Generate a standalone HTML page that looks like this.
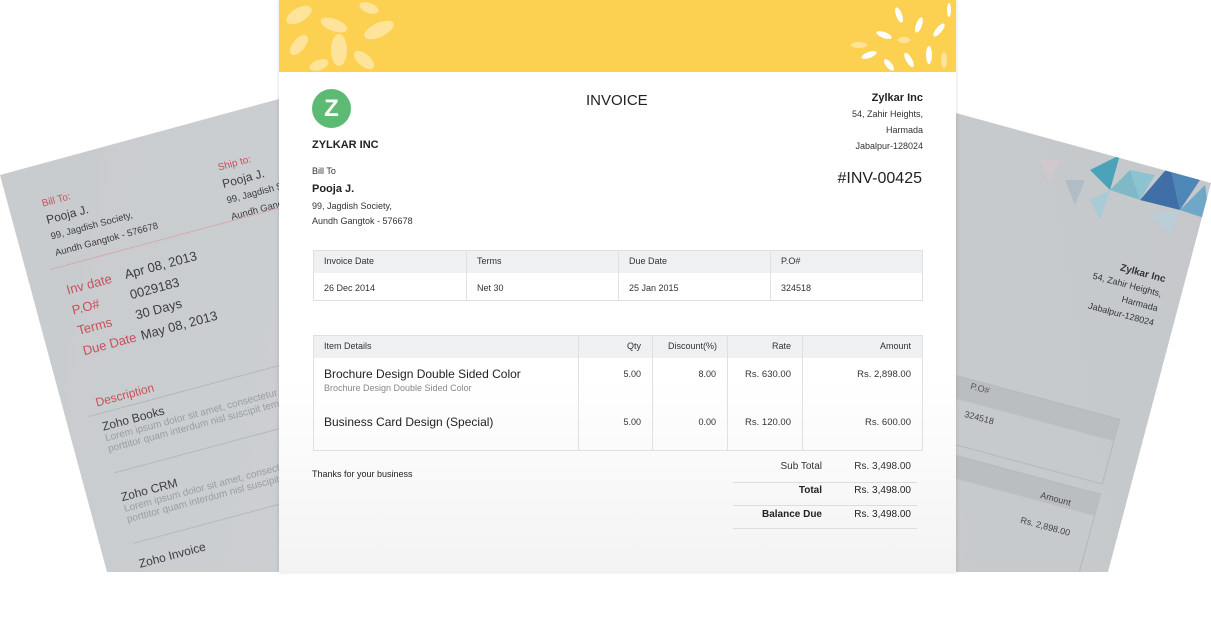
<!DOCTYPE html>
<html><head><meta charset="utf-8"><style>
*{margin:0;padding:0;box-sizing:border-box}
body{width:1211px;height:572px;overflow:hidden;background:#fff;position:relative;font-family:"Liberation Sans",sans-serif;color:#222}
.abs{position:absolute;white-space:nowrap}
.lp{position:absolute;left:0;top:0;width:1211px;height:572px;background:linear-gradient(100deg,#c8cbce,#d0d3d6 60%,#c9ccd0);clip-path:polygon(0 175px,279px 99px,279px 572px,107px 572px)}
.rp{position:absolute;left:0;top:0;width:1211px;height:572px;background:linear-gradient(80deg,#ced1d4,#c5c8cb);clip-path:polygon(956px 113px,1211px 183px,1108px 572px,956px 572px)}
.red{color:#c8505a}
.g{color:#3c3c3c}
.main{position:absolute;left:279px;top:0;width:677px;height:572px;background:linear-gradient(#fff 0,#fff 380px,#f3f3f3 572px);box-shadow:0 0 4px rgba(0,0,0,.15)}
.hdr{position:absolute;left:0;top:0;width:677px;height:72px;background:#fcd152;overflow:hidden}
.t{position:absolute;border:1px solid #e0e0e0;background:#fff}
.th{position:absolute;background:#eef0f1}
.vl{position:absolute;width:1px;background:#e0e0e0}
.s{font-size:10px;color:#333}
</style></head><body>
<div class="lp">
 <div class="abs" style="left:40px;top:196px;transform:rotate(-15deg);transform-origin:0 0;font-size:10px;line-height:17px">
  <div class="red">Bill To:</div>
  <div class="g" style="font-size:12px">Pooja J.</div>
  <div class="g" style="font-size:9.5px">99, Jagdish Society,</div>
  <div class="g" style="font-size:9.5px">Aundh Gangtok - 576678</div>
 </div>
 <div class="abs" style="left:216px;top:160px;transform:rotate(-15deg);transform-origin:0 0;font-size:10px;line-height:17px">
  <div class="red">Ship to:</div>
  <div class="g" style="font-size:12px">Pooja J.</div>
  <div class="g" style="font-size:9.5px">99, Jagdish Society,</div>
  <div class="g" style="font-size:9.5px">Aundh Gangtok</div>
 </div>
 <div class="abs" style="left:50px;top:269px;width:260px;height:1px;background:#d9a0a5;transform:rotate(-15deg);transform-origin:0 0;opacity:.8"></div>
 <div class="abs" style="left:64px;top:280px;transform:rotate(-15deg);transform-origin:0 0;font-size:13px;line-height:21px">
  <div><span class="red" style="display:inline-block;width:60px">Inv date</span><span class="g">Apr 08, 2013</span></div>
  <div><span class="red" style="display:inline-block;width:60px">P.O#</span><span class="g">0029183</span></div>
  <div><span class="red" style="display:inline-block;width:60px">Terms</span><span class="g">30 Days</span></div>
  <div><span class="red" style="display:inline-block;width:60px">Due Date</span><span class="g">May 08, 2013</span></div>
 </div>
 <div class="abs" style="left:94px;top:396px;transform:rotate(-15deg);transform-origin:0 0;font-size:12px">
  <div class="red">Description</div>
  <div style="width:220px;height:1px;background:#b5b8bb;margin:4px 0 6px -10px"></div>
  <div class="g" style="font-size:12px">Zoho Books</div>
  <div style="color:#9a9da0;font-size:10px">Lorem ipsum dolor sit amet, consectetur a</div>
  <div style="color:#9a9da0;font-size:10px">porttitor quam interdum nisl suscipit tem</div>
  <div style="width:220px;height:1px;background:#b5b8bb;margin:18px 0 18px 0"></div>
  <div class="g" style="font-size:12px">Zoho CRM</div>
  <div style="color:#9a9da0;font-size:10px">Lorem ipsum dolor sit amet, consecte</div>
  <div style="color:#9a9da0;font-size:10px">porttitor quam interdum nisl suscipit</div>
  <div style="width:220px;height:1px;background:#b5b8bb;margin:18px 0 14px 0"></div>
  <div class="g" style="font-size:12px">Zoho Invoice</div>
 </div>
</div>
<div class="rp">
 <svg class="abs" style="left:1030px;top:140px" width="181" height="100" viewBox="0 0 181 100">
  <polygon points="10,20 30,20 20,45" fill="#d6c8cc" opacity=".7"/>
  <polygon points="35,40 55,40 45,65" fill="#aab6c0" opacity=".7"/>
  <polygon points="60,30 90,15 80,50" fill="#4aa3b8"/>
  <polygon points="80,50 100,30 110,60" fill="#7fb9c8"/>
  <polygon points="60,60 80,50 70,80" fill="#a9cbd6"/>
  <polygon points="110,60 140,25 150,70" fill="#3f6fa6"/>
  <polygon points="140,25 170,40 150,70" fill="#4f86b8"/>
  <polygon points="150,70 175,45 180,80" fill="#6fa8c6"/>
  <polygon points="100,30 125,35 110,60" fill="#8cc3d0"/>
  <polygon points="120,75 150,70 140,95" fill="#b5cfd8" opacity=".8"/>
 </svg>
 <div class="abs" style="left:1090px;top:252px;transform:rotate(15deg);transform-origin:0 0;font-size:9px;color:#333;text-align:right;width:80px;line-height:15px">
  <div style="font-weight:bold;font-size:10px">Zylkar Inc</div>
  <div>54, Zahir Heights,</div><div>Harmada</div><div>Jabalpur-128024</div>
 </div>
 <div class="abs" style="left:956px;top:375px;width:170px;height:68px;border:1px solid #b4b7ba;transform:rotate(15deg);transform-origin:0 0"><div style="height:22px;background:#bbbec1"></div></div>
 <div class="abs" style="left:972px;top:381px;transform:rotate(15deg);transform-origin:0 0;font-size:9px;color:#555">P.O#</div>
 <div class="abs" style="left:966px;top:409px;transform:rotate(15deg);transform-origin:0 0;font-size:9px;color:#444">324518</div>
 <div class="abs" style="left:956px;top:455px;width:150px;height:130px;border:1px solid #b4b7ba;transform:rotate(15deg);transform-origin:0 0"><div style="height:22px;background:#bbbec1"></div></div>
 <div class="abs" style="left:1042px;top:490px;transform:rotate(15deg);transform-origin:0 0;font-size:9px;color:#444">Amount</div>
 <div class="abs" style="left:1022px;top:515px;transform:rotate(15deg);transform-origin:0 0;font-size:9px;color:#444">Rs. 2,898.00</div>
</div>

<div class="main">
 <div class="hdr">
  <svg width="677" height="72" viewBox="0 0 677 72">
   <g fill="#fde49a">
    <ellipse cx="20" cy="15" rx="14" ry="7" transform="rotate(-30 20 15)"/>
    <ellipse cx="55" cy="25" rx="14" ry="6" transform="rotate(20 55 25)"/>
    <ellipse cx="20" cy="45" rx="12" ry="6" transform="rotate(-50 20 45)"/>
    <ellipse cx="60" cy="50" rx="8" ry="16"/>
    <ellipse cx="100" cy="30" rx="16" ry="7" transform="rotate(-25 100 30)"/>
    <ellipse cx="85" cy="60" rx="12" ry="6" transform="rotate(40 85 60)"/>
    <ellipse cx="40" cy="65" rx="10" ry="5" transform="rotate(-20 40 65)"/>
    <ellipse cx="90" cy="8" rx="10" ry="5" transform="rotate(20 90 8)"/>
   </g>
   <g fill="#fff">
    <ellipse cx="620" cy="15" rx="3" ry="8" transform="rotate(-20 620 15)"/>
    <ellipse cx="640" cy="25" rx="3" ry="8" transform="rotate(20 640 25)"/>
    <ellipse cx="605" cy="35" rx="8" ry="3" transform="rotate(20 605 35)"/>
    <ellipse cx="650" cy="55" rx="3" ry="9"/>
    <ellipse cx="660" cy="30" rx="3" ry="8" transform="rotate(40 660 30)"/>
    <ellipse cx="590" cy="55" rx="8" ry="3" transform="rotate(-20 590 55)"/>
    <ellipse cx="630" cy="60" rx="3" ry="8" transform="rotate(-30 630 60)"/>
    <ellipse cx="670" cy="10" rx="2" ry="7"/>
    <ellipse cx="610" cy="65" rx="3" ry="7" transform="rotate(-40 610 65)"/>
   </g>
   <g fill="#fde49a">
    <ellipse cx="580" cy="45" rx="8" ry="3"/><ellipse cx="625" cy="40" rx="6" ry="3"/><ellipse cx="665" cy="60" rx="3" ry="8"/>
   </g>
  </svg>
 </div>
 <div class="abs" style="left:33px;top:89px;width:39px;height:39px;border-radius:50%;background:#5cba72;color:#fff;font-weight:bold;font-size:24px;text-align:center;line-height:39px">Z</div>
 <div class="abs" style="left:33px;top:139px;font-size:11px;font-weight:bold">ZYLKAR INC</div>
 <div class="abs" style="left:307px;top:92px;font-size:15px;color:#222">INVOICE</div>
 <div class="abs" style="right:33px;top:90px;font-size:10px;text-align:right;line-height:16px">
  <div style="font-weight:bold;font-size:11px">Zylkar Inc</div>
  <div style="font-size:9px;color:#333">54, Zahir Heights,</div>
  <div style="font-size:9px;color:#333">Harmada</div>
  <div style="font-size:9px;color:#333">Jabalpur-128024</div>
 </div>
 <div class="abs" style="left:33px;top:166px;font-size:9px;color:#333">Bill To</div>
 <div class="abs" style="left:33px;top:183px;font-size:11px;font-weight:bold">Pooja J.</div>
 <div class="abs" style="left:33px;top:201px;font-size:9px;color:#333">99, Jagdish Society,</div>
 <div class="abs" style="left:33px;top:216px;font-size:9px;color:#333">Aundh Gangtok - 576678</div>
 <div class="abs" style="right:34px;top:170px;font-size:16px;color:#222">#INV-00425</div>

 <div class="t" style="left:34px;top:250px;width:610px;height:51px">
  <div class="th" style="left:0;top:0;width:608px;height:22px"></div>
 </div>
 <div class="vl" style="left:187px;top:251px;height:49px"></div>
 <div class="vl" style="left:339px;top:251px;height:49px"></div>
 <div class="vl" style="left:491px;top:251px;height:49px"></div>
 <div class="abs s" style="left:45px;top:256px;font-size:9px">Invoice Date</div>
 <div class="abs s" style="left:198px;top:256px;font-size:9px">Terms</div>
 <div class="abs s" style="left:350px;top:256px;font-size:9px">Due Date</div>
 <div class="abs s" style="left:502px;top:256px;font-size:9px">P.O#</div>
 <div class="abs s" style="left:45px;top:283px;font-size:9px">26 Dec 2014</div>
 <div class="abs s" style="left:198px;top:283px;font-size:9px">Net 30</div>
 <div class="abs s" style="left:350px;top:283px;font-size:9px">25 Jan 2015</div>
 <div class="abs s" style="left:502px;top:283px;font-size:9px">324518</div>

 <div class="t" style="left:34px;top:335px;width:610px;height:116px;background:transparent">
  <div class="th" style="left:0;top:0;width:608px;height:22px"></div>
 </div>
 <div class="vl" style="left:299px;top:336px;height:114px"></div>
 <div class="vl" style="left:373px;top:336px;height:114px"></div>
 <div class="vl" style="left:448px;top:336px;height:114px"></div>
 <div class="vl" style="left:523px;top:336px;height:114px"></div>
 <div class="abs s" style="left:45px;top:341px;font-size:9px">Item Details</div>
 <div class="abs s" style="right:315px;top:341px;font-size:9px">Qty</div>
 <div class="abs s" style="right:239px;top:341px;font-size:9px">Discount(%)</div>
 <div class="abs s" style="right:165px;top:341px;font-size:9px">Rate</div>
 <div class="abs s" style="right:45px;top:341px;font-size:9px">Amount</div>
 <div class="abs" style="left:45px;top:367px;font-size:12px;color:#222">Brochure Design Double Sided Color</div>
 <div class="abs" style="left:45px;top:383px;font-size:9px;color:#888">Brochure Design Double Sided Color</div>
 <div class="abs s" style="right:315px;top:369px;font-size:9px">5.00</div>
 <div class="abs s" style="right:240px;top:369px;font-size:9px">8.00</div>
 <div class="abs s" style="right:165px;top:369px;font-size:9.5px">Rs. 630.00</div>
 <div class="abs s" style="right:45px;top:369px;font-size:9.5px">Rs. 2,898.00</div>
 <div class="abs" style="left:45px;top:415px;font-size:12px;color:#222">Business Card Design (Special)</div>
 <div class="abs s" style="right:315px;top:417px;font-size:9px">5.00</div>
 <div class="abs s" style="right:240px;top:417px;font-size:9px">0.00</div>
 <div class="abs s" style="right:165px;top:417px;font-size:9.5px">Rs. 120.00</div>
 <div class="abs s" style="right:45px;top:417px;font-size:9.5px">Rs. 600.00</div>

 <div class="abs" style="left:33px;top:469px;font-size:9px;color:#222">Thanks for your business</div>
 <div class="abs" style="right:134px;top:461px;font-size:10px;color:#333">Sub Total</div>
 <div class="abs" style="right:45px;top:461px;font-size:10px;color:#333">Rs. 3,498.00</div>
 <div class="abs" style="left:454px;top:482px;width:184px;height:1px;background:#ddd"></div>
 <div class="abs" style="right:134px;top:485px;font-size:10px;font-weight:bold;color:#222">Total</div>
 <div class="abs" style="right:45px;top:485px;font-size:10px;color:#222">Rs. 3,498.00</div>
 <div class="abs" style="left:454px;top:505px;width:184px;height:1px;background:#ddd"></div>
 <div class="abs" style="right:134px;top:509px;font-size:10px;font-weight:bold;color:#222">Balance Due</div>
 <div class="abs" style="right:45px;top:509px;font-size:10px;color:#222">Rs. 3,498.00</div>
 <div class="abs" style="left:454px;top:528px;width:184px;height:1px;background:#ddd"></div>
</div>
</body></html>
